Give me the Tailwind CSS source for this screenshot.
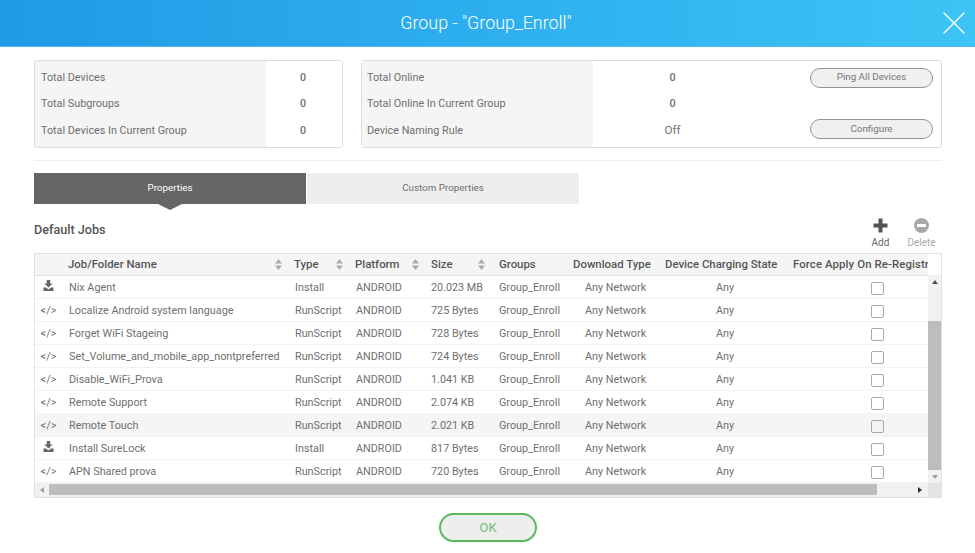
<!DOCTYPE html>
<html lang="en">
<head>
  <meta charset="UTF-8" />
  <title>Group - "Group_Enroll"</title>
  <script src="https://cdn.jsdelivr.net/npm/@tailwindcss/browser@4"></script>
</head>
<body class="bg-white h-[553px] overflow-hidden font-['Roboto','Liberation_Sans',sans-serif] text-[#6f6f6f]">

  <!-- Header -->
  <header class="relative h-[47px] bg-linear-to-r from-[#1f9ae6] to-[#3cc4f6] flex items-center justify-center border-b border-[#4fb7ee]">
    <h1 class="text-white text-[17.9px] font-light leading-none -mt-[1px] pr-[3px]">Group - "Group_Enroll"</h1>
    <svg class="absolute right-[10px] top-[12px]" width="22" height="22" viewBox="0 0 22 22" fill="none" stroke="#fff" stroke-width="1.4"><path d="M0.5 0.5 L21.5 21.5 M21.5 0.5 L0.5 21.5"/></svg>
  </header>

  <div class="px-[34px] pr-[33px]">
    <!-- Stats -->
    <div class="flex gap-[18px] pt-[13px] text-[10.8px]">
      <div class="w-[309px] h-[88px] border border-[#dcdcdc] rounded-[3px] flex overflow-hidden">
        <div class="w-[231px] bg-[#f5f5f5] pl-[6px] flex flex-col justify-around pt-[4px] pb-[3px]">
          <span>Total Devices</span>
          <span>Total Subgroups</span>
          <span>Total Devices In Current Group</span>
        </div>
        <div class="flex-1 flex flex-col justify-around pt-[4px] pb-[3px] items-center font-medium pr-[2px]">
          <span>0</span><span>0</span><span>0</span>
        </div>
      </div>
      <div class="w-[581px] h-[88px] border border-[#dcdcdc] rounded-[3px] flex overflow-hidden">
        <div class="w-[231px] bg-[#f5f5f5] pl-[5px] flex flex-col justify-around pt-[4px] pb-[3px]">
          <span>Total Online</span>
          <span>Total Online In Current Group</span>
          <span>Device Naming Rule</span>
        </div>
        <div class="w-[159px] flex flex-col justify-around pt-[4px] pb-[3px] items-center font-medium">
          <span>0</span><span>0</span><span class="text-[11.5px] font-normal">Off</span>
        </div>
        <div class="flex-1 flex flex-col justify-between pl-[58px] pt-[7px] pb-[8px]">
          <button class="w-[123px] h-[20px] rounded-full border border-[#8f93a0] bg-[#f0f0f0] text-[9.8px] text-[#777] pb-[2px]">Ping All Devices</button>
          <button class="w-[123px] h-[20px] rounded-full border border-[#8f93a0] bg-[#f0f0f0] text-[9.8px] text-[#777]">Configure</button>
        </div>
      </div>
    </div>

    <div class="mt-[12px] border-t border-[#eeeeee]"></div>

    <!-- Tabs -->
    <div class="flex gap-[1px] mt-[12px] text-[9.8px]">
      <div class="relative w-[272px] h-[31px] bg-[#666666] text-white flex items-center justify-center">
        Properties
        <span class="absolute left-[124px] top-[31px] w-0 h-0 border-x-[12px] border-x-transparent border-t-[6px] border-t-[#666666]"></span>
      </div>
      <div class="w-[272px] h-[31px] bg-[#eeeeee] flex items-center justify-center">Custom Properties</div>
    </div>

    <!-- Default Jobs -->
    <div class="flex items-start justify-between h-[35px] mt-[14px]">
      <h2 class="text-[12.6px] font-medium text-[#555] mt-[3px]">Default Jobs</h2>
      <div class="flex text-[10px]">
        <div class="w-[41px] flex flex-col items-center">
          <svg width="15" height="15" viewBox="0 0 15 15" fill="#555"><path d="M5.5 0.5 H9.5 V5.5 H14.5 V9.5 H9.5 V14.5 H5.5 V9.5 H0.5 V5.5 H5.5 Z"/></svg>
          <span class="text-[#666] mt-[3px] leading-[14px]">Add</span>
        </div>
        <div class="w-[41px] flex flex-col items-center">
          <svg width="15" height="15" viewBox="0 0 15 15"><circle cx="7.5" cy="7.5" r="7.5" fill="#a8a8a8"/><rect x="3" y="6" width="9" height="3" fill="#fff"/></svg>
          <span class="text-[#aaa] mt-[3px] leading-[14px]">Delete</span>
        </div>
      </div>
    </div>

    <!-- Jobs table -->
    <div class="w-[908px] h-[245px] border border-[#e2e2e2] text-[10.8px]">
      <div class="flex">
        <div class="w-[893px] h-[229px] overflow-hidden">
          <table class="table-fixed w-[1010px] border-separate border-spacing-0">
            <colgroup>
              <col class="w-[27px]" /><col class="w-[226px]" /><col class="w-[61px]" /><col class="w-[76px]" /><col class="w-[67px]" /><col class="w-[75px]" /><col class="w-[92px]" /><col class="w-[128px]" /><col class="w-[258px]" />
            </colgroup>
            <thead class="text-[11.4px]">
              <tr class="h-[22px] bg-[#f5f5f5] text-left text-[#555]">
                <th class="font-medium border-b border-[#e2e2e2]"></th>
                <th class="font-medium border-b border-[#e2e2e2] pl-[6px]"><div class="flex items-center justify-between pr-[6px]">Job/Folder Name <svg width="7" height="11" viewBox="0 0 7 11" fill="#aaa"><path d="M3.5 0 L7 4.5 H0 Z M3.5 11 L7 6.5 H0 Z"/></svg></div></th>
                <th class="font-medium border-b border-[#e2e2e2] pl-[6px]"><div class="flex items-center justify-between pr-[6px]">Type <svg width="7" height="11" viewBox="0 0 7 11" fill="#aaa"><path d="M3.5 0 L7 4.5 H0 Z M3.5 11 L7 6.5 H0 Z"/></svg></div></th>
                <th class="font-medium border-b border-[#e2e2e2] pl-[6px]"><div class="flex items-center justify-between pr-[6px]">Platform <svg width="7" height="11" viewBox="0 0 7 11" fill="#aaa"><path d="M3.5 0 L7 4.5 H0 Z M3.5 11 L7 6.5 H0 Z"/></svg></div></th>
                <th class="font-medium border-b border-[#e2e2e2] pl-[6px]"><div class="flex items-center justify-between pr-[7px]">Size <svg width="7" height="11" viewBox="0 0 7 11" fill="#aaa"><path d="M3.5 0 L7 4.5 H0 Z M3.5 11 L7 6.5 H0 Z"/></svg></div></th>
                <th class="font-medium border-b border-[#e2e2e2] pl-[7px]">Groups</th>
                <th class="font-medium border-b border-[#e2e2e2] pl-[6px] whitespace-nowrap">Download Type</th>
                <th class="font-medium border-b border-[#e2e2e2] pl-[6px] whitespace-nowrap">Device Charging State</th>
                <th class="font-medium border-b border-[#e2e2e2] pl-[6px] whitespace-nowrap tracking-[0.1px]">Force Apply On Re-Registration</th>
              </tr>
            </thead>
            <tbody class="[&_td]:h-[23px] [&_td]:border-b [&_td]:border-[#f3f3f3] [&_td]:whitespace-nowrap [&_td]:pt-[3px]">
              <tr>
                <td class="text-center"><svg class="inline-block -mt-[6px]" width="11" height="11" viewBox="0 0 11 11" fill="#666"><path d="M3.8 0 H7.2 V3.6 H9.6 L5.5 7.6 L1.4 3.6 H3.8 Z"/><path d="M0.5 7.4 H3 L5.5 9.4 L8 7.4 H10.5 V11 H0.5 Z"/></svg></td>
                <td class="pl-[7px]">Nix Agent</td><td class="pl-[7px]">Install</td><td class="pl-[7px]">ANDROID</td><td class="pl-[6px]">20.023 MB</td><td class="pl-[7px]">Group_Enroll</td><td class="pl-[18px]">Any Network</td><td class="text-center pl-[4px]">Any</td>
                <td class="pl-[84px]"><span class="block w-[13px] h-[13px] border border-[#aaa] rounded-[2px]"></span></td>
              </tr>
              <tr>
                <td class="text-center text-[11px]">&lt;/&gt;</td>
                <td class="pl-[7px]">Localize Android system language</td><td class="pl-[7px]">RunScript</td><td class="pl-[7px]">ANDROID</td><td class="pl-[6px]">725 Bytes</td><td class="pl-[7px]">Group_Enroll</td><td class="pl-[18px]">Any Network</td><td class="text-center pl-[4px]">Any</td>
                <td class="pl-[84px]"><span class="block w-[13px] h-[13px] border border-[#aaa] rounded-[2px]"></span></td>
              </tr>
              <tr>
                <td class="text-center text-[11px]">&lt;/&gt;</td>
                <td class="pl-[7px]">Forget WiFi Stageing</td><td class="pl-[7px]">RunScript</td><td class="pl-[7px]">ANDROID</td><td class="pl-[6px]">728 Bytes</td><td class="pl-[7px]">Group_Enroll</td><td class="pl-[18px]">Any Network</td><td class="text-center pl-[4px]">Any</td>
                <td class="pl-[84px]"><span class="block w-[13px] h-[13px] border border-[#aaa] rounded-[2px]"></span></td>
              </tr>
              <tr>
                <td class="text-center text-[11px]">&lt;/&gt;</td>
                <td class="pl-[7px]">Set_Volume_and_mobile_app_nontpreferred</td><td class="pl-[7px]">RunScript</td><td class="pl-[7px]">ANDROID</td><td class="pl-[6px]">724 Bytes</td><td class="pl-[7px]">Group_Enroll</td><td class="pl-[18px]">Any Network</td><td class="text-center pl-[4px]">Any</td>
                <td class="pl-[84px]"><span class="block w-[13px] h-[13px] border border-[#aaa] rounded-[2px]"></span></td>
              </tr>
              <tr>
                <td class="text-center text-[11px]">&lt;/&gt;</td>
                <td class="pl-[7px]">Disable_WiFi_Prova</td><td class="pl-[7px]">RunScript</td><td class="pl-[7px]">ANDROID</td><td class="pl-[6px]">1.041 KB</td><td class="pl-[7px]">Group_Enroll</td><td class="pl-[18px]">Any Network</td><td class="text-center pl-[4px]">Any</td>
                <td class="pl-[84px]"><span class="block w-[13px] h-[13px] border border-[#aaa] rounded-[2px]"></span></td>
              </tr>
              <tr>
                <td class="text-center text-[11px]">&lt;/&gt;</td>
                <td class="pl-[7px]">Remote Support</td><td class="pl-[7px]">RunScript</td><td class="pl-[7px]">ANDROID</td><td class="pl-[6px]">2.074 KB</td><td class="pl-[7px]">Group_Enroll</td><td class="pl-[18px]">Any Network</td><td class="text-center pl-[4px]">Any</td>
                <td class="pl-[84px]"><span class="block w-[13px] h-[13px] border border-[#aaa] rounded-[2px]"></span></td>
              </tr>
              <tr class="bg-[#f5f5f5]">
                <td class="text-center text-[11px]">&lt;/&gt;</td>
                <td class="pl-[7px]">Remote Touch</td><td class="pl-[7px]">RunScript</td><td class="pl-[7px]">ANDROID</td><td class="pl-[6px]">2.021 KB</td><td class="pl-[7px]">Group_Enroll</td><td class="pl-[18px]">Any Network</td><td class="text-center pl-[4px]">Any</td>
                <td class="pl-[84px]"><span class="block w-[13px] h-[13px] border border-[#aaa] rounded-[2px]"></span></td>
              </tr>
              <tr>
                <td class="text-center"><svg class="inline-block -mt-[6px]" width="11" height="11" viewBox="0 0 11 11" fill="#666"><path d="M3.8 0 H7.2 V3.6 H9.6 L5.5 7.6 L1.4 3.6 H3.8 Z"/><path d="M0.5 7.4 H3 L5.5 9.4 L8 7.4 H10.5 V11 H0.5 Z"/></svg></td>
                <td class="pl-[7px]">Install SureLock</td><td class="pl-[7px]">Install</td><td class="pl-[7px]">ANDROID</td><td class="pl-[6px]">817 Bytes</td><td class="pl-[7px]">Group_Enroll</td><td class="pl-[18px]">Any Network</td><td class="text-center pl-[4px]">Any</td>
                <td class="pl-[84px]"><span class="block w-[13px] h-[13px] border border-[#aaa] rounded-[2px]"></span></td>
              </tr>
              <tr>
                <td class="text-center text-[11px]">&lt;/&gt;</td>
                <td class="pl-[7px]">APN Shared prova</td><td class="pl-[7px]">RunScript</td><td class="pl-[7px]">ANDROID</td><td class="pl-[6px]">720 Bytes</td><td class="pl-[7px]">Group_Enroll</td><td class="pl-[18px]">Any Network</td><td class="text-center pl-[4px]">Any</td>
                <td class="pl-[84px]"><span class="block w-[13px] h-[13px] border border-[#aaa] rounded-[2px]"></span></td>
              </tr>
            </tbody>
          </table>
        </div>
        <!-- Vertical scrollbar -->
        <div class="w-[13px] flex flex-col">
          <div class="h-[21px] bg-white"></div>
          <div class="flex-1 bg-[#f1f1f1] flex flex-col items-center">
            <div class="h-[46px] pt-[5px]"><svg width="6" height="4" viewBox="0 0 6 4" fill="#505050" class="block"><path d="M3 0 L6 4 H0 Z"/></svg></div>
            <div class="w-full h-[149px] bg-[#bdbdbd]"></div>
            <div class="pt-[5px]"><svg width="6" height="4" viewBox="0 0 6 4" fill="#a0a0a0" class="block"><path d="M3 4 L6 0 H0 Z"/></svg></div>
          </div>
        </div>
      </div>
      <!-- Horizontal scrollbar -->
      <div class="h-[14px] flex bg-[#f1f1f1]">
        <div class="w-[14px] flex items-center justify-center"><svg width="4" height="6" viewBox="0 0 4 6" fill="#a0a0a0"><path d="M0 3 L4 0 V6 Z"/></svg></div>
        <div class="w-[828px] h-[11px] mt-[1px] bg-[#bdbdbd]"></div>
        <div class="flex-1 flex items-center justify-end pr-[6px]"><svg width="4" height="6" viewBox="0 0 4 6" fill="#303030"><path d="M4 3 L0 0 V6 Z"/></svg></div>
        <div class="w-[13px] bg-[#e4e4e4]"></div>
      </div>
    </div>

    <!-- Footer -->
    <div class="flex justify-center mt-[15px]">
      <button class="w-[98px] h-[29px] rounded-full border-2 border-[#5cb85c] bg-[#eeeeee] text-[13px] text-[#6fbf73]">OK</button>
    </div>
  </div>
</body>
</html>
